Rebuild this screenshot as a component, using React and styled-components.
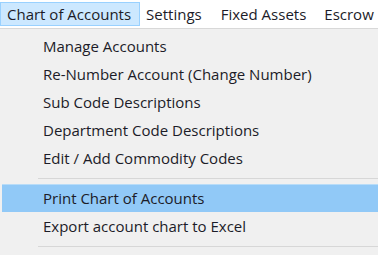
import React from 'react';
import styled, { createGlobalStyle } from 'styled-components';

const Global = createGlobalStyle`
  html, body {
    margin:0;
    padding:0;
    background:#ffffff;
  }
  body {
    font-family:"Open Sans", "Noto Sans", sans-serif;
    color:#1c1c28;
    overflow:hidden;
  }
`

const Page = styled.div`
  width:378px;
  height:255px;
  display:flex;
  flex-direction:column;
`

const MenuBar = styled.div`
  height:28px;
  display:flex;
  align-items:center;
  background:#ffffff;
  overflow:hidden;
`

const TopItem = styled.div`
  flex-shrink:0;
  white-space:nowrap;
  height:22px;
  display:flex;
  align-items:center;
  padding:0 ${({ $pad }) => $pad ?? 8}px 0 ${({ $lpad }) => $lpad ?? 7}px;
  font-size:15px;
  background:${({ $active }) => $active ? '#cce8ff' : 'transparent'};
  border:1px solid ${({ $active }) => $active ? '#99d1ff' : 'transparent'};
`

const Dropdown = styled.div`
  flex:1;
  background:#f0f0f0;
  border-top:1px solid #d8d8d8;
  padding:3px 0 0 2px;
  display:flex;
  flex-direction:column;
`

const Item = styled.div`
  height:28px;
  white-space:nowrap;
  display:flex;
  align-items:center;
  padding-left:41px;
  font-size:15px;
  background:${({ $hover }) => $hover ? '#91c9f7' : 'transparent'};
  box-shadow:${({ $hover }) => $hover ? 'inset 0 1px 0 #b8dcf8' : 'none'};
`

const Separator = styled.div`
  height:12px;
  display:flex;
  align-items:center;
  padding-left:36px;
  &::after {
    content:'';
    flex:1;
    height:1px;
    background:#d7d7d7;
  }
`

const items = [
  'Manage Accounts',
  'Re-Number Account (Change Number)',
  'Sub Code Descriptions',
  'Department Code Descriptions',
  'Edit / Add Commodity Codes',
]

export default function App() {
  return (
    <Page>
      <Global />
      <MenuBar>
        <TopItem $active $lpad={6} $pad={8}>Chart of Accounts</TopItem>
        <TopItem $lpad={5} $pad={8}>Settings</TopItem>
        <TopItem $lpad={9} $pad={8}>Fixed Assets</TopItem>
        <TopItem $lpad={8}>Escrow</TopItem>
      </MenuBar>
      <Dropdown>
        {items.map(label => <Item key={label}>{label}</Item>)}
        <Separator />
        <Item $hover>Print Chart of Accounts</Item>
        <Item>Export account chart to Excel</Item>
        <Separator />
      </Dropdown>
    </Page>
  )
}
